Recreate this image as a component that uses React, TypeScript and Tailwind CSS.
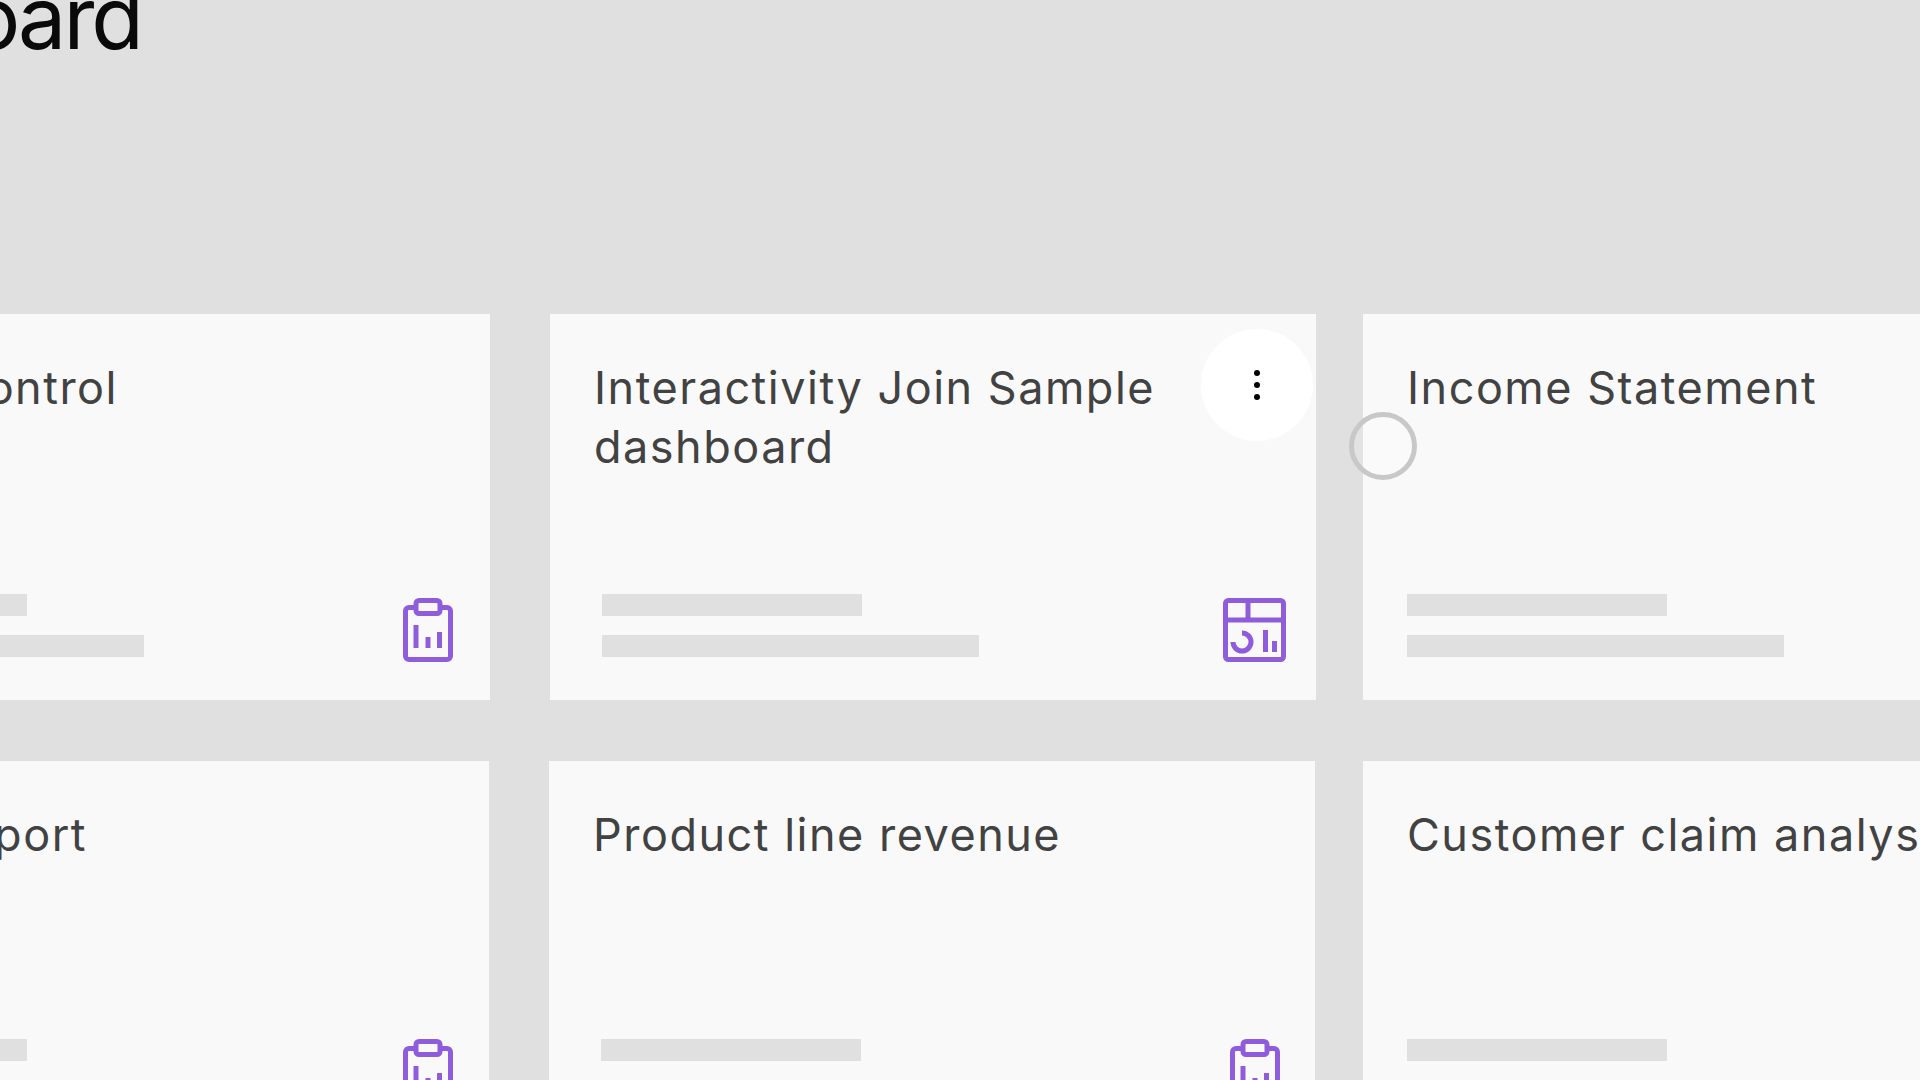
import React from "react";

const ClipboardIcon = () => (
  <svg width="50" height="64" viewBox="0 0 50 64" fill="none" stroke="#8f5cdc" strokeWidth="5">
    <path d="M11 9.500H6a3.500 3.500 0 0 0-3.500 3.500v45a3.500 3.500 0 0 0 3.500 3.500h38a3.500 3.500 0 0 0 3.500-3.500V13A3.500 3.500 0 0 0 44 9.500h-5" />
    <rect x="13" y="2.500" width="24" height="13" rx="3" />
    <path d="M13 27v23M25 39v11M36.500 34v16" />
  </svg>
);

const DashboardIcon = () => (
  <svg width="63" height="64" viewBox="0 0 63 64" fill="none" stroke="#8f5cdc" strokeWidth="5">
    <rect x="2.500" y="2.500" width="58" height="59" rx="3" />
    <path d="M2 22h59M25 2v20" />
    <path d="M19 35a9 9 0 1 1-9 9" />
    <path d="M42.500 32v22M51.500 43v11" />
  </svg>
);

type propsCard = {
  title: string;
  icon: React.ReactNode;
  className: string;
  titleClass?: string;
  barClass?: string;
  children?: React.ReactNode;
};

function Card({ title, icon, className, titleClass, barClass, children }: propsCard) {
  return (
    <div className={`relative flex flex-none flex-col justify-between bg-[#f9f9f9] pb-[38px] pl-[44px] pt-[44px] ${className}`}>
      <p className={`font-['Inter',sans-serif] text-[45px] leading-[59px] tracking-[1.5px] text-[#424242] ${titleClass ?? ""}`}>{title}</p>
      <div className={`flex items-end justify-between ${barClass ?? "pl-[8px]"}`}>
        <div className="mb-[5px] flex flex-col gap-[19px]">
          <div className="h-[22px] w-[260px] bg-[#e0e0e0]" />
          <div className="h-[22px] w-[377px] bg-[#e0e0e0]" />
        </div>
        {icon}
      </div>
      {children}
    </div>
  );
}

export default function App() {
  return (
    <div className="h-[1080px] w-[1920px] overflow-hidden bg-[#e0e0e0]">
      <div className="flex h-[314px] w-[141px] items-start justify-end">
        <h1 className="mt-[-42px] whitespace-nowrap font-['Inter',sans-serif] text-[86px] leading-[120px] tracking-[-3px] text-[#0a0a0a]">
          Dashboard
        </h1>
      </div>

      <div className="ml-[-285px] flex whitespace-nowrap">
        <Card
          title="Interactivity Control"
          icon={<ClipboardIcon />}
          className="h-[386px] w-[775px] pr-[37px]"
          titleClass="flex w-[359px] justify-end"
        />
        <Card
          title="Interactivity Join Sample dashboard"
          icon={<DashboardIcon />}
          className="ml-[60px] h-[386px] w-[766px] whitespace-normal pr-[30px]"
          titleClass="w-[600px]"
        >
          <div className="absolute right-[3px] top-[15px] flex h-[112px] w-[112px] flex-col items-center justify-center gap-[6px] rounded-full bg-white">
            <span className="h-[6px] w-[6px] rounded-full bg-black" />
            <span className="h-[6px] w-[6px] rounded-full bg-black" />
            <span className="h-[6px] w-[6px] rounded-full bg-black" />
          </div>
        </Card>
        <Card title="Income Statement" icon={null} className="ml-[47px] h-[386px] w-[766px] pr-[30px]" barClass="pl-0" />
      </div>

      <div className="ml-[-285px] mt-[61px] flex whitespace-nowrap">
        <Card
          title="Sales report"
          icon={<div className="mb-[4px]"><ClipboardIcon /></div>}
          className="h-[384px] w-[774px] pr-[36px]"
          titleClass="flex w-[328px] justify-end"
        />
        <Card
          title="Product line revenue"
          icon={<div className="mb-[4px]"><ClipboardIcon /></div>}
          className="ml-[60px] h-[384px] w-[766px] pr-[35px]"
        />
        <Card title="Customer claim analysis" icon={null} className="ml-[48px] h-[384px] w-[766px] pr-[30px]" barClass="pl-0" />
      </div>

      {/* click indicator over the cards */}
      <div className="absolute left-[1349px] top-[412px] h-[68px] w-[68px] rounded-full border-[5px] border-[#c8c8c8] bg-white/10" />
    </div>
  );
}
